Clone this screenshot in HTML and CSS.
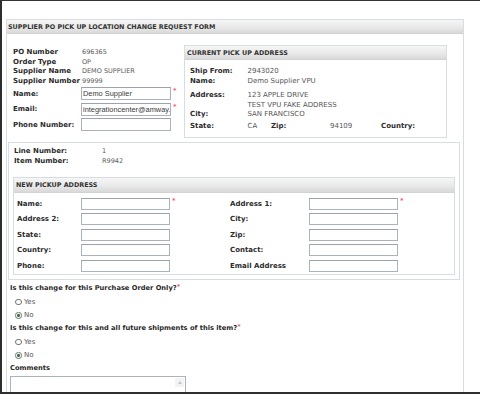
FILE: index.html
```html
<!DOCTYPE html>
<html>
<head>
<meta charset="utf-8">
<link rel="stylesheet" href="styles.css">
</head>
<body>
<div class="frame">
  <div class="panel">
    <div class="bar">SUPPLIER PO PICK UP LOCATION CHANGE REQUEST FORM</div>
    <div class="top">
      <div class="supplier">
        <div class="info"><span class="lbl">PO Number</span><span class="val">696365</span></div>
        <div class="info"><span class="lbl">Order Type</span><span class="val">OP</span></div>
        <div class="info"><span class="lbl">Supplier Name</span><span class="val">DEMO SUPPLIER</span></div>
        <div class="info"><span class="lbl">Supplier Number</span><span class="val">99999</span></div>
        <div class="field"><span class="lbl">Name:</span><input class="txt" type="text" value="Demo Supplier"><span class="req">*</span></div>
        <div class="field"><span class="lbl">Email:</span><input class="txt" type="text" value="integrationcenter@amway.com"><span class="req">*</span></div>
        <div class="field"><span class="lbl">Phone Number:</span><input class="txt" type="text"></div>
      </div>
      <div class="box current">
        <div class="bar sub">CURRENT PICK UP ADDRESS</div>
        <div class="cur-body">
          <div class="crow"><span class="clbl">Ship From:</span><span class="cval">2943020</span></div>
          <div class="crow"><span class="clbl">Name:</span><span class="cval">Demo Supplier VPU</span></div>
          <div class="cgroup">
            <div class="crow2"><span class="clbl">Address:</span><span class="cval">123 APPLE DRIVE</span></div>
            <div class="crow2"><span class="clbl"></span><span class="cval">TEST VPU FAKE ADDRESS</span></div>
            <div class="crow2"><span class="clbl">City:</span><span class="cval">SAN FRANCISCO</span></div>
          </div>
          <div class="crow state">
            <span class="clbl">State:</span>
            <span class="cval st">CA</span>
            <span class="clbl zip">Zip:</span>
            <span class="cval zipv">94109</span>
            <span class="clbl">Country:</span>
          </div>
        </div>
      </div>
    </div>

    <div class="box line">
      <div class="lrow"><span class="llbl">Line Number:</span><span class="val">1</span></div>
      <div class="lrow"><span class="llbl">Item Number:</span><span class="val">R9942</span></div>

      <div class="box newaddr">
        <div class="bar sub tall">NEW PICKUP ADDRESS</div>
        <div class="nbody">
          <div class="npair">
            <div class="ngroup left"><span class="nlbl">Name:</span><input class="txt n" type="text"><span class="req">*</span></div>
            <div class="ngroup right"><span class="nlbl">Address 1:</span><input class="txt n" type="text"><span class="req">*</span></div>
          </div>
          <div class="npair">
            <div class="ngroup left"><span class="nlbl">Address 2:</span><input class="txt n" type="text"></div>
            <div class="ngroup right"><span class="nlbl">City:</span><input class="txt n" type="text"></div>
          </div>
          <div class="npair">
            <div class="ngroup left"><span class="nlbl">State:</span><input class="txt n" type="text"></div>
            <div class="ngroup right"><span class="nlbl">Zip:</span><input class="txt n" type="text"></div>
          </div>
          <div class="npair">
            <div class="ngroup left"><span class="nlbl">Country:</span><input class="txt n" type="text"></div>
            <div class="ngroup right"><span class="nlbl">Contact:</span><input class="txt n" type="text"></div>
          </div>
          <div class="npair">
            <div class="ngroup left"><span class="nlbl">Phone:</span><input class="txt n" type="text"></div>
            <div class="ngroup right"><span class="nlbl">Email Address</span><input class="txt n" type="text"></div>
          </div>
        </div>
      </div>
    </div>

    <div class="questions">
      <div class="q first">Is this change for this Purchase Order Only?<span class="req">*</span></div>
      <div class="radio"><span class="dot"></span>Yes</div>
      <div class="radio"><span class="dot on"></span>No</div>
      <div class="q">Is this change for this and all future shipments of this item?<span class="req">*</span></div>
      <div class="radio"><span class="dot"></span>Yes</div>
      <div class="radio"><span class="dot on"></span>No</div>
      <div class="q">Comments</div>
      <div class="comments"><span class="scroll"><span class="arrow"></span></span></div>
    </div>
  </div>
</div>
</body>
</html>
```

FILE: styles.css
```css
* { box-sizing: border-box; }
html, body { margin: 0; padding: 0; background: #fff; }
body { font-family: "DejaVu Sans", Verdana, sans-serif; color: #2b2b2b; }

.frame {
  width: 480px;
  height: 394px;
  border-top: 1px solid #333;
  border-left: 2px solid #2e2e2e;
  border-bottom: 2px solid #2e2e2e;
  overflow: hidden;
  background: #fff;
}

.panel {
  margin-top: 18px;
  margin-left: 4px;
  width: 458px;
  height: 400px;
  border: 1px solid #d6dde3;
  border-bottom: none;
}

.bar {
  height: 14px;
  line-height: 14px;
  padding-left: 1px;
  font-size: 6.4px;
  font-weight: bold;
  color: #333;
  background: linear-gradient(#f6f6f6 0%, #e9e9e9 55%, #d9d9d9 100%);
  border-bottom: 1px solid #d2d2d2;
  white-space: nowrap;
}
.bar.sub { padding-left: 2px; }
.bar.tall { height: 15px; line-height: 15px; }

.top {
  display: flex;
  align-items: flex-start;
  padding-left: 6px;
  margin-bottom: 4px;
}

.supplier {
  width: 171px;
  margin-top: 14px;
}

.info {
  display: flex;
  height: 9.5px;
  line-height: 9.5px;
  white-space: nowrap;
}
.lbl {
  width: 68px;
  flex: none;
  font-size: 7px;
  font-weight: bold;
  color: #2b2b2b;
}
.val {
  font-size: 6.5px;
  color: #5a5a5a;
  padding-left: 1px;
}

.field {
  display: flex;
  align-items: center;
  height: 15.5px;
  white-space: nowrap;
}

.txt {
  display: block;
  width: 90px;
  height: 13px;
  margin: 0;
  padding: 0 0 0 1px;
  border: 1px solid #aab3bc;
  border-top-color: #9aa3ad;
  background: #fff;
  font-family: "Liberation Sans", Arial, sans-serif;
  font-size: 7.4px;
  color: #3a3a3a;
  outline: none;
}
.txt.n { width: 89px; height: 12px; }

.req {
  color: #e03a3a;
  font-size: 7px;
  font-weight: normal;
  margin-left: 2px;
  align-self: flex-start;
  line-height: 10px;
}

.box {
  border: 1px solid #d6dde3;
  background: #fff;
}

.current {
  width: 263px;
  height: 93px;
  margin-top: 11px;
}

.cur-body {
  padding: 6px 0 0 5px;
}
.crow, .crow2 {
  display: flex;
  white-space: nowrap;
}
.crow { height: 10px; line-height: 10px; }
.crow2 { height: 9.5px; line-height: 9.5px; }
.cgroup { margin-top: 5px; }
.crow.state { margin-top: 2.5px; height: 9.5px; line-height: 9.5px; }

.clbl {
  width: 57.5px;
  flex: none;
  font-size: 7px;
  font-weight: bold;
  color: #2b2b2b;
}
.cval {
  font-size: 7px;
  color: #555;
}
.cval.st { width: 23.5px; flex: none; }
.clbl.zip { width: 59px; }
.cval.zipv { width: 51px; flex: none; }

.line {
  margin-left: 1px;
  width: 452px;
  height: 138px;
  padding: 4px 0 0 5px;
}
.lrow {
  display: flex;
  height: 9.5px;
  line-height: 9.5px;
  white-space: nowrap;
}
.llbl {
  width: 87px;
  flex: none;
  font-size: 7px;
  font-weight: bold;
}

.newaddr {
  margin-top: 10.75px;
  margin-left: -1px;
  width: 442px;
  height: 98px;
}
.nbody {
  padding: 3.25px 0 0 3px;
}
.npair {
  display: flex;
  height: 15.5px;
}
.ngroup {
  display: flex;
  align-items: center;
  white-space: nowrap;
}
.ngroup.left { width: 213px; }
.nlbl {
  width: 64px;
  flex: none;
  font-size: 7px;
  font-weight: bold;
}
.ngroup.right .nlbl { width: 79px; }

.questions {
  padding-left: 3px;
}
.q {
  height: 13px;
  line-height: 13px;
  font-size: 6.7px;
  font-weight: bold;
  white-space: nowrap;
}
.q.first {
  margin-top: 1px;
  height: 14px;
  line-height: 14px;
}
.q .req {
  margin-left: 0;
  line-height: normal;
  vertical-align: 1px;
}
.radio {
  display: flex;
  align-items: center;
  height: 13.5px;
  padding-left: 5px;
  font-size: 7px;
  color: #555;
}
.dot {
  width: 6.5px;
  height: 6.5px;
  border: 1px solid #6d7770;
  border-radius: 50%;
  margin-right: 2.5px;
  display: flex;
  align-items: center;
  justify-content: center;
  background: #fff;
}
.dot.on::after {
  content: "";
  width: 2.5px;
  height: 2.5px;
  border-radius: 50%;
  background: #3f6b45;
}

.comments {
  margin-top: 1px;
  width: 176px;
  height: 30px;
  border: 1px solid #aab3bc;
  display: flex;
  justify-content: flex-end;
}
.scroll {
  width: 9px;
  height: 9px;
  margin: 1px 1px 0 0;
  display: flex;
  align-items: center;
  justify-content: center;
  background: #f3f3f3;
}
.arrow {
  width: 0;
  height: 0;
  border-left: 2.5px solid transparent;
  border-right: 2.5px solid transparent;
  border-bottom: 3px solid #c4c4c4;
}
```
